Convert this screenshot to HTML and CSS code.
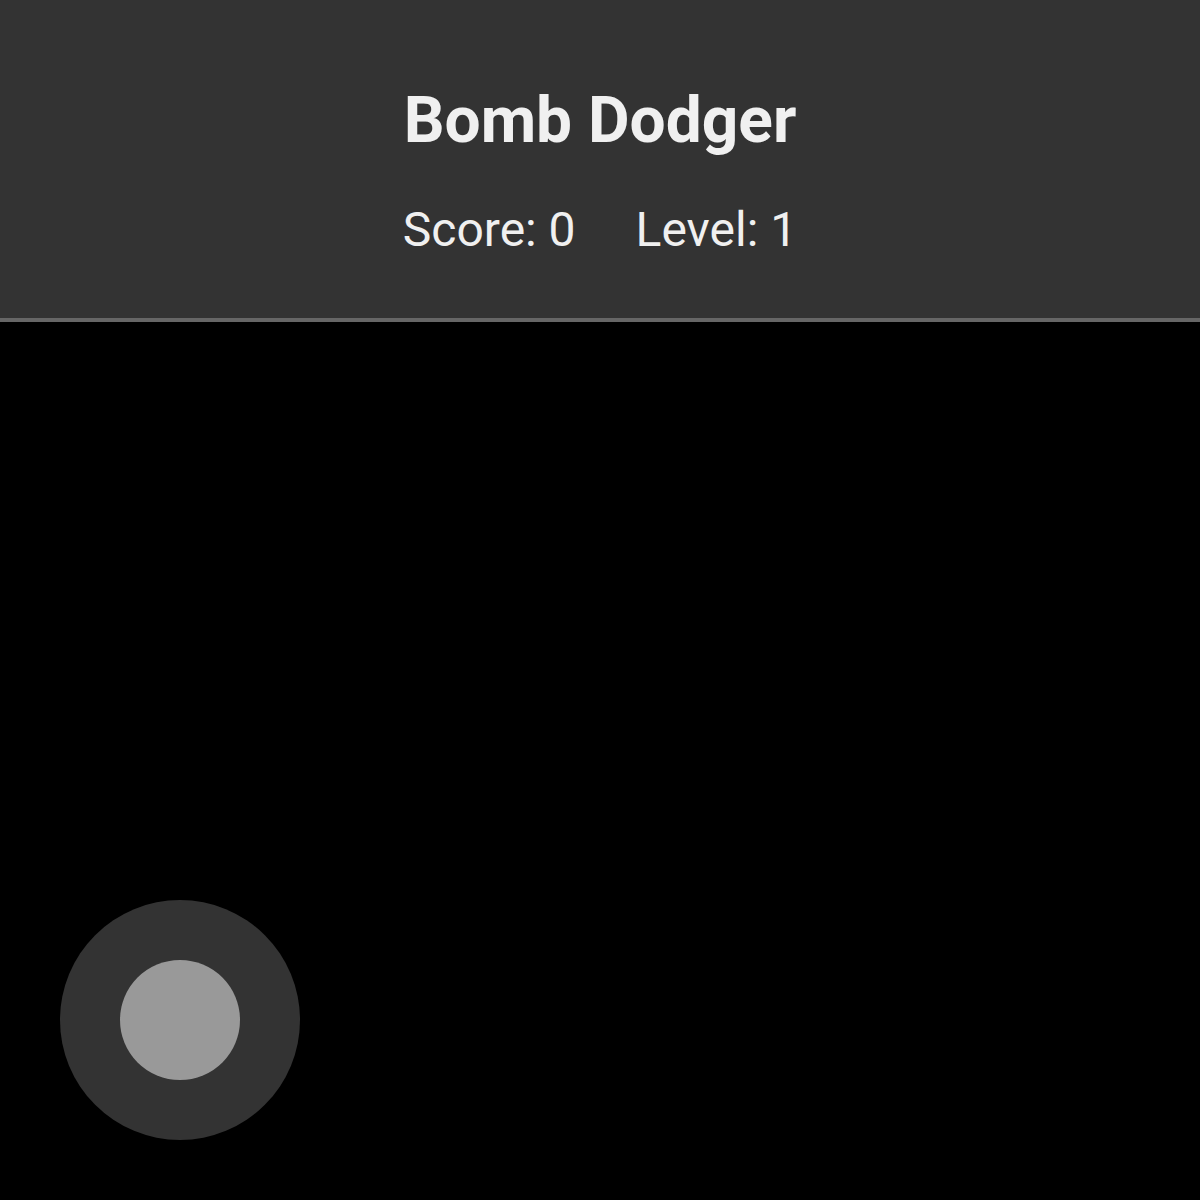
FILE: index.html
```html
<!DOCTYPE html>
<html lang="en">
<head>
<meta charset="utf-8">
<title>Bomb Dodger</title>
<link rel="stylesheet" href="styles.css">
</head>
<body>
<header class="header">
  <h1 class="title">Bomb Dodger</h1>
  <div class="stats">
    <span class="stat">Score: 0</span>
    <span class="stat">Level: 1</span>
  </div>
</header>
<main class="game">
  <div class="joystick">
    <div class="knob"></div>
  </div>
</main>
</body>
</html>
```
FILE: styles.css
```css
html, body {
  margin: 0;
  padding: 0;
  height: 100%;
}
body {
  background: #000;
  color: #f0f0f0;
  font-family: Roboto, "Liberation Sans", sans-serif;
  display: flex;
  flex-direction: column;
}
.header {
  background: #333;
  text-align: center;
  padding: 40px 0 60px;
  border-bottom: 4px solid #666;
}
.title {
  font-size: 64px;
  font-weight: 700;
  margin: 42.88px 0;
  line-height: normal;
}
.stats {
  font-size: 48px;
  line-height: normal;
  display: flex;
  justify-content: center;
  gap: 60px;
}
.game {
  flex: 1;
  position: relative;
}
.joystick {
  position: absolute;
  left: 60px;
  bottom: 60px;
  width: 240px;
  height: 240px;
  border-radius: 50%;
  background: #333;
  display: flex;
  align-items: center;
  justify-content: center;
}
.knob {
  width: 120px;
  height: 120px;
  border-radius: 50%;
  background: #999;
}
```
